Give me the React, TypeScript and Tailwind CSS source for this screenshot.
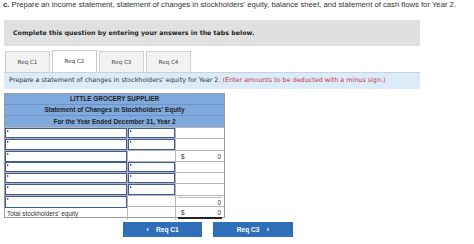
import React from 'react';

const Marker = () => (
  <span className="absolute left-[1px] top-[1px] w-0 h-0 border-l-[2px] border-l-[#333] border-y-[1.5px] border-y-transparent" />
);

const InputCell = () => (
  <div className="relative h-full border border-[#3b5d94] bg-white">
    <Marker />
  </div>
);

type Row = { c1: 'input' | string; c2: 'input' | 'plain'; c3?: { dollar?: boolean; value: string; top?: boolean; total?: boolean } };

const rows: Row[] = [
  { c1: 'input', c2: 'input' },
  { c1: 'input', c2: 'input' },
  { c1: 'input', c2: 'plain', c3: { dollar: true, value: '0' } },
  { c1: 'input', c2: 'input' },
  { c1: 'input', c2: 'input' },
  { c1: 'input', c2: 'input' },
  { c1: 'input', c2: 'plain', c3: { value: '0', top: true } },
  { c1: "Total stockholders' equity", c2: 'plain', c3: { dollar: true, value: '0', total: true } },
];

const App = () => {
  const tabs = ['Req C1', 'Req C2', 'Req C3', 'Req C4'];

  return (
    <div className="w-[474px] h-[244px] bg-white overflow-hidden" style={{ fontFamily: '"Liberation Sans", Arial, sans-serif' }}>
      {/* Question heading */}
      <p className="pl-[3px] h-[12px] leading-[10px] text-[7.7px] text-[#333] whitespace-nowrap">
        <span className="font-bold">c.</span> Prepare an income statement, statement of changes in stockholders' equity, balance sheet, and statement of cash flows for Year 2.
      </p>

      {/* Instruction box */}
      <div className="ml-[4px] mt-[8px] w-[416px] h-[26px] bg-[#e0e0e0] flex items-center pl-[9px]">
        <span className="text-[6.3px] font-bold text-[#222] whitespace-nowrap" style={{ fontFamily: '"DejaVu Sans", Verdana, sans-serif' }}>
          Complete this question by entering your answers in the tabs below.
        </span>
      </div>

      {/* Tabs */}
      <div className="ml-[5px] mt-[4px] h-[22px] flex items-end gap-[2px]" style={{ fontFamily: '"DejaVu Sans", Verdana, sans-serif' }}>
        {tabs.map((t, i) => (
          <div
            key={t}
            className={
              i === 1
                ? 'w-[45px] h-[22px] bg-white border border-b-0 border-[#c8c8c8] flex items-center justify-center text-[5.6px] text-[#333]'
                : 'w-[45px] h-[21px] bg-[#f2f2f2] border border-b-0 border-[#d0d0d0] flex items-center justify-center text-[5.6px] text-[#444]'
            }
          >
            {t}
          </div>
        ))}
      </div>

      {/* Info bar */}
      <div className="ml-[4px] w-[416px] h-[17px] bg-[#dcebf8] border-t border-[#c5d3df] flex items-center pl-[5px] text-[6.4px] whitespace-nowrap" style={{ fontFamily: '"DejaVu Sans", Verdana, sans-serif' }}>
        <span className="text-[#333]">Prepare a statement of changes in stockholders' equity for Year 2.&nbsp;</span>
        <span className="text-[#c0394a]">(Enter amounts to be deducted with a minus sign.)</span>
      </div>

      {/* Statement table */}
      <div className="ml-[4px] mt-[4px] w-[221px] border border-[#9a9a9a]">
        <div className="bg-[#80aade] text-[#222] font-bold text-[6.4px]">
          <div className="h-[11px] flex items-center justify-center border-b border-[#6a95cb]">LITTLE GROCERY SUPPLIER</div>
          <div className="h-[11px] flex items-center justify-center border-b border-[#6a95cb]">Statement of Changes in Stockholders' Equity</div>
          <div className="h-[11px] flex items-center justify-center">For the Year Ended December 31, Year 2</div>
        </div>
        {rows.map((r, i) => (
          <div key={i} className="h-[11.25px] grid grid-cols-[123px_48px_1fr] border-t border-[#b5b5b5] text-[6.4px] text-[#333]">
            <div className="border-r border-[#b5b5b5]">
              {r.c1 === 'input' ? <InputCell /> : <div className="h-full flex items-center pl-[2px]">{r.c1}</div>}
            </div>
            <div className="border-r border-[#b5b5b5]">
              {r.c2 === 'input' ? <InputCell /> : null}
            </div>
            <div className="h-full px-[2px] py-[1px]">
              {r.c3 ? (
                <div
                  className={
                    r.c3.total
                      ? 'h-full flex items-center justify-between pl-[3px] pr-[1px] border-b-2 border-[#222]'
                      : r.c3.top
                        ? 'h-full flex items-center justify-between pl-[3px] pr-[1px] border-t border-[#bbb]'
                        : 'h-full flex items-center justify-between pl-[3px] pr-[1px]'
                  }
                >
                  <span>{r.c3.dollar ? '$' : ''}</span>
                  <span>{r.c3.value}</span>
                </div>
              ) : null}
            </div>
          </div>
        ))}
      </div>

      {/* Navigation */}
      <div className="mt-[4px] ml-[123px] flex gap-[11px]">
        <button className="w-[79px] h-[15px] bg-[#2f6fba] text-white text-[6.6px] font-bold flex items-center justify-center gap-[7px]">
          <span className="text-[8px] leading-none">‹</span>
          <span>Req C1</span>
        </button>
        <button className="w-[80px] h-[15px] bg-[#2f6fba] text-white text-[6.6px] font-bold flex items-center justify-center gap-[7px]">
          <span>Req C3</span>
          <span className="text-[8px] leading-none">›</span>
        </button>
      </div>
    </div>
  );
};

export default App;
